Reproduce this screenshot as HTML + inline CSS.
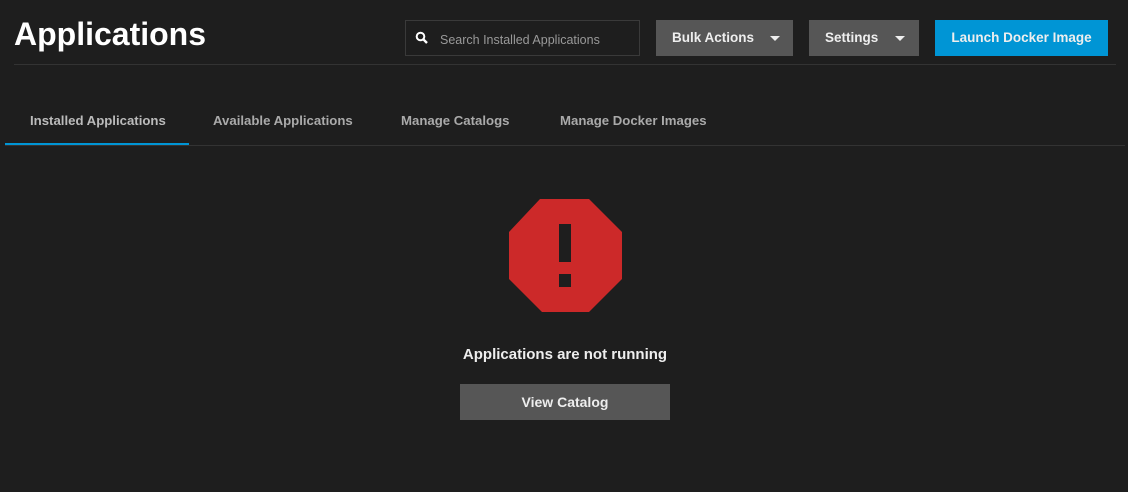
<!DOCTYPE html>
<html><head><style>
body{margin:0;width:1128px;height:492px;background:#1e1e1e;font-family:"Liberation Sans",sans-serif;position:relative;overflow:hidden;color:#fff}
.a{position:absolute}
.btn{position:absolute;top:20px;height:36px;background:#565656;color:#eee;font-weight:bold;font-size:14px;line-height:36px;box-sizing:border-box}
.tab{position:absolute;top:113px;font-size:13.2px;font-weight:bold;color:#aaa}
.car{position:absolute;top:16px;width:0;height:0;border-left:5px solid transparent;border-right:5px solid transparent;border-top:5px solid #eee}
</style></head><body>
<div class="a" style="left:14px;top:16px;font-size:32px;font-weight:bold">Applications</div>
<div class="a" style="left:405px;top:20px;width:235px;height:36px;border:1px solid #3a3a3a;box-sizing:border-box"></div>
<svg class="a" style="left:415px;top:31px" width="14" height="14" viewBox="0 0 14 14"><circle cx="5.5" cy="5.5" r="3.8" stroke="#fff" stroke-width="2" fill="none"/><path d="M8.3 8.3L12 12" stroke="#fff" stroke-width="2.4"/></svg>
<div class="a" style="left:440px;top:33px;font-size:12.5px;color:#999">Search Installed Applications</div>
<div class="btn" style="left:656px;width:137px;padding-left:16px;font-size:13.5px">Bulk Actions<span class="car" style="left:114px"></span></div>
<div class="btn" style="left:809px;width:110px;padding-left:16px;font-size:13.5px">Settings<span class="car" style="left:86px"></span></div>
<div class="btn" style="left:935px;width:173px;background:#0095d5;text-align:center;font-size:13.5px">Launch Docker Image</div>
<div class="a" style="left:14px;top:64px;width:1102px;height:1px;background:#333"></div>
<div class="tab" style="left:30px;color:#bbb">Installed Applications</div>
<div class="tab" style="left:213px">Available Applications</div>
<div class="tab" style="left:401px">Manage Catalogs</div>
<div class="tab" style="left:560px">Manage Docker Images</div>
<div class="a" style="left:5px;top:145px;width:1120px;height:1px;background:#333"></div>
<div class="a" style="left:5px;top:143px;width:184px;height:2px;background:#0095d5"></div>
<svg class="a" style="left:509px;top:199px" width="113" height="113" viewBox="0 0 113 113"><polygon points="31,0 80,0 113,33 113,80 80,113 33,113 0,80 0,33" fill="#cc2929"/><rect x="50" y="25" width="12" height="38" fill="#1e1e1e"/><rect x="50" y="75" width="12" height="13" fill="#1e1e1e"/></svg>
<div class="a" style="left:440px;top:346px;width:250px;text-align:center;font-size:15px;font-weight:bold;color:#eee">Applications are not running</div>
<div class="a" style="left:460px;top:384px;width:210px;height:36px;background:#565656;text-align:center;line-height:36px;font-size:14px;font-weight:bold;color:#eee">View Catalog</div>
</body></html>
